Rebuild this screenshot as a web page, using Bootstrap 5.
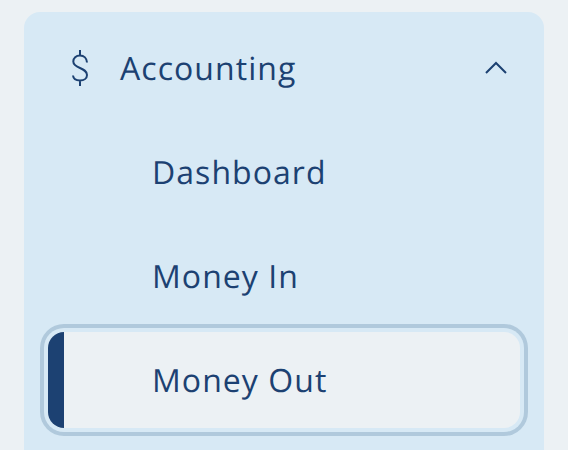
<!DOCTYPE html>
<html lang="en">
<head>
<meta charset="utf-8">
<title>Accounting</title>
<link href="https://cdn.jsdelivr.net/npm/bootstrap@5.3.0/dist/css/bootstrap.min.css" rel="stylesheet">
<style>
html, body { height: 450px; overflow: hidden; }
body { background: #ecf1f4; padding: 12px 24px 0; font-family: "Open Sans", sans-serif; text-rendering: geometricPrecision; }
.side-panel { background: #d7e9f5; border: 0; border-radius: 16px 16px 0 0; padding: 8px 16px 0; color: #1c4172; font-size: 32px; letter-spacing: 1.05px; width: 520px; height: 438px; }
.side-row { height: 96px; padding: 0 20px 0 32px; border-radius: 16px; color: #1c4172; text-decoration: none; margin-bottom: 8px; line-height: 1; flex: none; }
.side-label { padding-top: 2px; }
.side-head { gap: 32px; }
.side-sub { padding-left: 112px; }
.side-active { background: #ecf1f4; box-shadow: 0 0 0 4px #d7e9f5, 0 0 0 8px #b0c9dc; margin: 0 8px; padding-left: 104px; overflow: hidden; position: relative; }
.side-active::before { content: ""; position: absolute; left: 0; top: 0; bottom: 0; width: 16px; background: #1c4172; }
</style>
</head>
<body>
<div class="card side-panel">
  <a class="side-row side-head d-flex align-items-center" href="#">
    <svg width="16" height="36" viewBox="0 0 16 36" fill="none" stroke="#1c4172" stroke-width="2" stroke-linecap="butt"><path d="M15 12.500C14.800 8.500 12 5.500 8 5.500C4 5.500 1.300 8 1.300 11.500C1.300 15 4.500 16.500 8 18C11.500 19.500 15 21 15 25C15 28.500 12 30.500 8 30.500C4 30.500 1.300 28.500 1 25.500M8 0V5.500M8 30.500V36"/></svg>
    <span class="side-label">Accounting</span>
    <svg class="ms-auto" width="24" height="14" viewBox="0 0 24 14" fill="none" stroke="#1c4172" stroke-width="2"><path d="M2 12L12 2L22 12"/></svg>
  </a>
  <a class="side-row side-sub d-flex align-items-center" href="#"><span class="side-label">Dashboard</span></a>
  <a class="side-row side-sub d-flex align-items-center" href="#"><span class="side-label">Money In</span></a>
  <a class="side-row side-active d-flex align-items-center" href="#"><span class="side-label">Money Out</span></a>
</div>
<script src="https://cdn.jsdelivr.net/npm/bootstrap@5.3.0/dist/js/bootstrap.bundle.min.js"></script>
</body>
</html>
